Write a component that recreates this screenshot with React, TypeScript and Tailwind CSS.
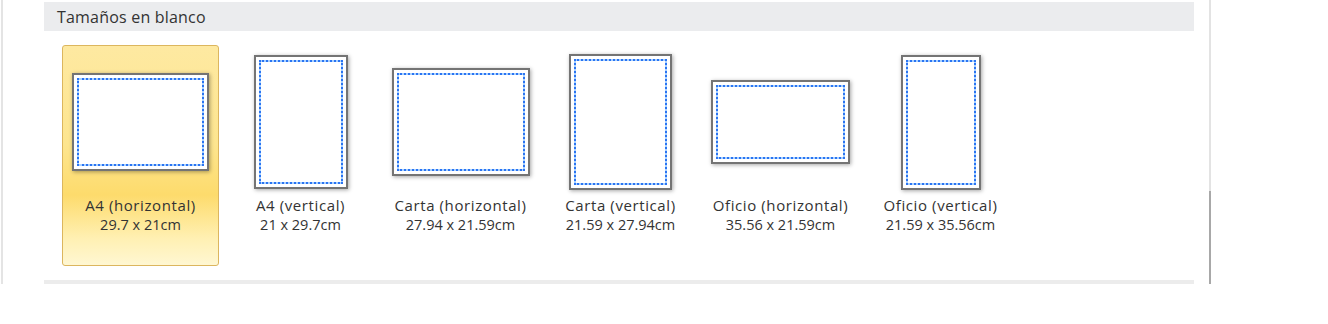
import React from "react";

const sizes = [
  { name: "A4 (horizontal)", dims: "29.7 x 21cm", paper: "w-[137px] h-[98px]", selected: true },
  { name: "A4 (vertical)", dims: "21 x 29.7cm", paper: "w-[94px] h-[134px]" },
  { name: "Carta (horizontal)", dims: "27.94 x 21.59cm", paper: "w-[138px] h-[108px]" },
  { name: "Carta (vertical)", dims: "21.59 x 27.94cm", paper: "w-[103px] h-[136px]" },
  { name: "Oficio (horizontal)", dims: "35.56 x 21.59cm", paper: "w-[139px] h-[84px]" },
  { name: "Oficio (vertical)", dims: "21.59 x 35.56cm", paper: "w-[80px] h-[135px]" },
];

const Paper = ({ className }: { className: string }) => (
  <div
    className={`${className} flex border-2 border-[#747474] bg-white p-[3px] shadow-[1px_1px_4px_rgba(0,0,0,0.35)]`}
  >
    <div className="flex-1 border-2 border-dotted border-[#2a74f2] bg-[#a9d1ff] shadow-[inset_0_0_0_300px_#ffffff]" />
  </div>
);

const SizeTile = ({ item }: { item: (typeof sizes)[number] }) => (
  <div
    className={`flex h-[221px] w-[157px] shrink-0 flex-col items-center rounded-[3px] border pt-[1px] ${
      item.selected
        ? "border-[#dcb65e] bg-[linear-gradient(180deg,#fee9a1_0%,#fde58f_45%,#fddb6c_68%,#fff0b3_88%,#fff7d2_100%)]"
        : "border-transparent"
    }`}
  >
    <div className="flex h-[150px] w-full items-center justify-center">
      <Paper className={item.paper} />
    </div>
    <div className="-mt-px whitespace-nowrap text-center leading-[19px] text-[#333]">
      <div className="text-[15px] tracking-[0.6px]">{item.name}</div>
      <div className="text-[14.5px]">{item.dims}</div>
    </div>
  </div>
);

export default function App() {
  return (
    <div
      className="h-[324px] w-[1328px] bg-white"
      style={{ fontFamily: '"Open Sans", "Noto Sans", sans-serif' }}
    >
      <div className="flex h-[284px] w-[1211px]">
        <div className="ml-px w-[2px] bg-[#e4e4e4]" />
        <div className="flex flex-1 flex-col pl-[41px] pr-[15px] pt-[2px]">
          <div className="flex h-[29px] items-center bg-[#ebecee] pl-[13px] text-[16px] tracking-[0.2px] text-[#333]">
            Tamaños en blanco
          </div>
          <div className="flex flex-1 gap-[3px] pl-[18px] pt-[14px]">
            {sizes.map((s) => (
              <SizeTile key={s.name} item={s} />
            ))}
          </div>
          <div className="h-[4px] bg-[#ececec]" />
        </div>
        <div className="flex w-[2px] flex-col">
          <div className="h-[191px] bg-[#e3e3e3]" />
          <div className="flex-1 bg-[#a8a8a8]" />
        </div>
      </div>
    </div>
  );
}
